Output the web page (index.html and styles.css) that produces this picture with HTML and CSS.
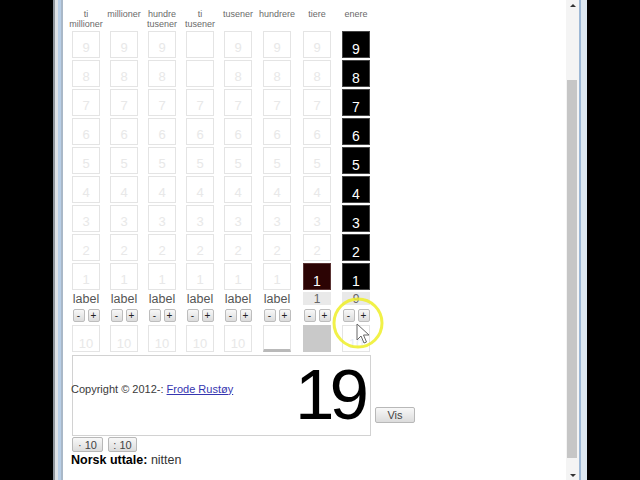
FILE: index.html
```html
<!doctype html>
<html>
<head>
  <meta charset="utf-8">
  <link rel="stylesheet" href="styles.css">
</head>
<body>
  <div class="screen">
    <div class="void"></div>
    <div class="frame-left"></div>
    <div class="page">
      <div id="abacus" class="abacus"></div>
      <div class="result">
        <div class="display">
          <span class="copy">Copyright &copy; 2012-: <a href="#">Frode Rustøy</a></span>
          <span class="number">19</span>
        </div>
        <button class="vis">Vis</button>
      </div>
      <div class="shift">
        <button class="times">&middot; 10</button>
        <button class="divide">: 10</button>
      </div>
      <p class="speech"><b>Norsk uttale:</b> nitten</p>
    </div>
    <div class="scrollbar">
      <div class="arrow up"></div>
      <div class="thumb"></div>
      <div class="arrow down"></div>
    </div>
    <div class="frame-right"></div>

    <!-- pointer with click highlight -->
    <svg class="pointer" width="640" height="480" viewBox="0 0 640 480">
      <circle cx="358" cy="323" r="24" fill="none" stroke="rgba(238,238,40,0.85)" stroke-width="3"/>
      <path d="M357 324 L357 340 L361 336 L364 343 L366.5 342 L363.5 335 L369 335 Z"
            fill="#fff" stroke="#666" stroke-width="1" stroke-linejoin="round"/>
    </svg>
  </div>
  <script src="counter.js"></script>
</body>
</html>
```

FILE: styles.css
```css
html, body {
  margin: 0;
  padding: 0;
  height: 100%;
  overflow: hidden;
  background: #000;
  font-family: "Liberation Sans", Arial, sans-serif;
}
.screen {
  position: relative;
  display: flex;
  width: 640px;
  height: 480px;
}
.void {
  width: 53px;
}
.frame-left {
  width: 10px;
  background: linear-gradient(to right,
    #8f969d 0, #8f969d 2px,
    #dde1e5 2px, #dde1e5 5px,
    #b8cee6 5px, #b8cee6 8px,
    #a9b8c8 8px, #a9b8c8 10px);
}
.page {
  width: 503px;
  box-sizing: border-box;
  padding: 9px 8px 0;
  background: #fff;
}

/* abacus grid: header, digits 9..1, label, -/+, ten */
.abacus {
  display: grid;
  grid-template-columns: 38px 38px 38px 38px 38px 40px 40px 38px;
  grid-template-rows: 22px repeat(9, 29px) 17px 16px 30px;
  justify-items: center;
  align-items: start;
  margin-left: -4px;
}
.head {
  font-size: 9px;
  line-height: 10px;
  color: #6a6a6a;
  text-align: center;
}
.cell {
  box-sizing: border-box;
  width: 28px;
  height: 27px;
  border: 1px solid #e4e4e4;
  color: #e8e8e8;
  font-size: 13px;
  line-height: 1;
  display: flex;
  align-items: flex-end;
  justify-content: center;
  padding-bottom: 3px;
}
.cell.on {
  background: #000;
  border-color: #444;
  color: #fff;
  font-size: 14px;
  padding-bottom: 1px;
}
.cell.carry {
  background: #2c0404;
  border-color: #5a3434;
  color: #fff;
  font-size: 14px;
  padding-bottom: 1px;
}
.cell.ten {
  padding-bottom: 1px;
}
.cell.bar {
  border-bottom: 3px solid #b9b9b9;
}
.cell.grey {
  background: #c9c9c9;
  border-color: #c9c9c9;
}
.cell.faint {
  color: #e8edf5;
}
.label {
  box-sizing: border-box;
  padding-top: 1px;
  font-size: 12.5px;
  line-height: 12px;
  color: #555;
}
.label.value {
  width: 28px;
  height: 13px;
  background: #e9e9e9;
  text-align: center;
  font-size: 12px;
  color: #666;
}
.steps {
  display: flex;
  gap: 3px;
}
.steps button {
  width: 12px;
  height: 13px;
  padding: 0;
  border: 1px solid #bdbdbd;
  border-radius: 2px;
  background: linear-gradient(#f8f8f8, #dcdcdc);
  font: 10px/10px "Liberation Sans", Arial, sans-serif;
  color: #222;
}

/* number display */
.result {
  display: flex;
  align-items: flex-end;
  gap: 4px;
}
.display {
  box-sizing: border-box;
  width: 299px;
  height: 81px;
  margin-left: 1px;
  border: 1px solid #d2d2d2;
  display: flex;
  justify-content: space-between;
  align-items: center;
  padding-right: 6px;
}
.copy {
  margin-left: -2px;
  margin-bottom: 14px;
  font-size: 11px;
  color: #3a3a3a;
}
.copy a {
  color: #3535b0;
}
.number {
  margin-bottom: 2px;
  font-size: 71px;
  line-height: 72px;
  letter-spacing: -5px;
  color: #000;
}
.vis,
.shift button {
  padding: 0;
  border: 1px solid #b8b8b8;
  border-radius: 2px;
  background: linear-gradient(#f8f8f8, #dcdcdc);
  font: 11px "Liberation Sans", Arial, sans-serif;
  color: #444;
}
.vis {
  width: 40px;
  height: 16px;
  margin-bottom: 13px;
}
.shift {
  display: flex;
  gap: 5px;
  margin: 1px 0 0 1px;
}
.shift button {
  height: 15px;
}
.times {
  width: 31px;
}
.divide {
  width: 29px;
}
.speech {
  margin: 1px 0 0;
  font-size: 12.5px;
  line-height: 15px;
  color: #333;
}
.speech b {
  color: #000;
}

/* window chrome on the right */
.scrollbar {
  width: 13px;
  display: flex;
  flex-direction: column;
  align-items: center;
  background: #f4f4f4;
}
.arrow {
  width: 0;
  height: 0;
  border-left: 3px solid transparent;
  border-right: 3px solid transparent;
}
.arrow.up {
  margin-top: 4px;
  border-bottom: 3px solid #333;
}
.arrow.down {
  margin-top: auto;
  margin-bottom: 3px;
  border-top: 3px solid #333;
}
.thumb {
  width: 10px;
  height: 378px;
  margin: 73px 1px 0 0;
  background: #c6c6c6;
}
.frame-right {
  width: 8px;
  background: linear-gradient(to right,
    #9db8d6 0, #9db8d6 2px,
    #dde7f1 2px, #dde7f1 8px);
}
.pointer {
  position: absolute;
  top: 0;
  left: 0;
  pointer-events: none;
}
```

FILE: counter.js
```js
// Place-value columns, left to right. value = number of lit digits.
var places = [
  { name: 'ti<br>millioner', value: 0, label: 'label', ten: 'off' },
  { name: 'millioner', value: 0, label: 'label', ten: 'off' },
  { name: 'hundre<br>tusener', value: 0, label: 'label', ten: 'off' },
  { name: 'ti<br>tusener', value: 0, hide: [9, 8], label: 'label', ten: 'off' },
  { name: 'tusener', value: 0, label: 'label', ten: 'off' },
  { name: 'hundrere', value: 0, label: 'label', ten: 'bar' },
  { name: 'tiere', value: 1, carry: true, label: '1', ten: 'grey' },
  { name: 'enere', value: 9, label: '9', ten: 'faint' }
];

var grid = document.getElementById('abacus');

function add(cls, html) {
  var el = document.createElement('div');
  el.className = cls;
  if (html) el.innerHTML = html;
  grid.appendChild(el);
  return el;
}

places.forEach(function (p) { add('head', p.name); });

for (var d = 9; d >= 1; d--) {
  places.forEach(function (p) {
    if (p.hide && p.hide.indexOf(d) >= 0) return add('cell');
    if (d <= p.value) return add(p.carry ? 'cell carry' : 'cell on', d);
    add('cell', d);
  });
}

places.forEach(function (p) {
  add(p.label === 'label' ? 'label' : 'label value', p.label);
});

places.forEach(function () {
  add('steps', '<button>-</button><button>+</button>');
});

places.forEach(function (p) {
  if (p.ten === 'off') add('cell ten', '10');
  else if (p.ten === 'faint') add('cell ten faint', '10');
  else add('cell ten ' + p.ten);
});
```
